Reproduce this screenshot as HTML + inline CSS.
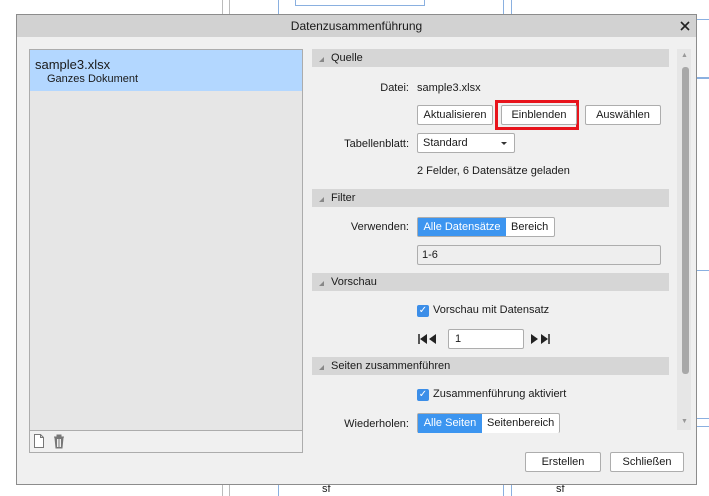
<!DOCTYPE html>
<html><head><style>
*{box-sizing:border-box;margin:0;padding:0}
body{width:709px;height:496px;background:#fff;position:relative;overflow:hidden;font-family:"Liberation Sans",sans-serif;font-size:11px;color:#1a1a1a}
.a{position:absolute}
.vl{position:absolute;width:1px}
.btn{position:absolute;background:#fff;border:1px solid #adadad;border-radius:2px;text-align:center;line-height:18px;font-size:11px}
.sec{position:absolute;left:312px;width:357px;height:18px;background:#d6d6d6;line-height:18px;padding-left:19px;font-size:11px}
.sec:before{content:"";position:absolute;left:7px;top:8px;border-left:5px solid transparent;border-bottom:5px solid #888}
.lbl{position:absolute;text-align:right;font-size:11px}
.chk{position:absolute;width:12px;height:12px;background:#3c8ee8;border-radius:2px;color:#fff;font-size:10px;line-height:12px;text-align:center}
</style></head><body>
<div class="vl" style="left:222px;top:0;height:14px;background:#bbb"></div>
<div class="vl" style="left:229px;top:0;height:14px;background:#bbb"></div>
<div class="vl" style="left:278px;top:0;height:14px;background:#8ab0e0"></div>
<div class="a" style="left:295px;top:0;width:130px;height:6px;border:1px solid #8ab0e0;border-top:none"></div>
<div class="vl" style="left:503px;top:0;height:14px;background:#8ab0e0"></div>
<div class="vl" style="left:511px;top:0;height:14px;background:#8ab0e0"></div>
<div class="a" style="left:697px;top:19px;width:12px;height:1px;background:#8ab0e0"></div>
<div class="a" style="left:697px;top:77px;width:12px;height:2px;background:#8ab0e0"></div>
<div class="a" style="left:697px;top:270px;width:12px;height:1px;background:#8ab0e0"></div>
<div class="a" style="left:697px;top:418px;width:12px;height:1px;background:#8ab0e0"></div>
<div class="a" style="left:697px;top:426px;width:12px;height:1px;background:#8ab0e0"></div>
<div class="vl" style="left:222px;top:484px;height:12px;background:#bbb"></div>
<div class="vl" style="left:229px;top:484px;height:12px;background:#bbb"></div>
<div class="vl" style="left:278px;top:484px;height:12px;background:#8ab0e0"></div>
<div class="vl" style="left:503px;top:484px;height:12px;background:#8ab0e0"></div>
<div class="vl" style="left:511px;top:484px;height:12px;background:#8ab0e0"></div>
<div class="a" style="left:322px;top:483px;font-size:11px">sf</div>
<div class="a" style="left:556px;top:483px;font-size:11px">sf</div>

<div class="a" style="left:16px;top:14px;width:681px;height:471px;background:#f0f0f0;border:1px solid #8c8c8c"></div>
<div class="a" style="left:17px;top:15px;width:679px;height:22px;background:#d2d2d2;text-align:center;line-height:22px;font-size:12px">Datenzusammenführung</div>
<svg class="a" style="left:680px;top:21px" width="10" height="10"><path d="M1 1L9 9M9 1L1 9" stroke="#222" stroke-width="1.6"/></svg>

<div class="a" style="left:29px;top:49px;width:274px;height:404px;border:1px solid #acacac;background:#e6e6e6"></div>
<div class="a" style="left:30px;top:50px;width:272px;height:41px;background:#b3d7ff"></div>
<div class="a" style="left:35px;top:57px;font-size:13px">sample3.xlsx</div>
<div class="a" style="left:47px;top:73px;font-size:11px">Ganzes Dokument</div>
<div class="a" style="left:30px;top:430px;width:272px;height:22px;background:#f0f0f0;border-top:1px solid #acacac"></div>
<svg class="a" style="left:33px;top:433px" width="40" height="16"><path d="M1.5 1.5h6l3 3v10h-9z M7.5 1.5v3h3" fill="#fff" stroke="#777"/><path d="M21 4h10M24 4v-2h4v2M22 5h8l-1 10h-6z" fill="#777" stroke="#777"/><path d="M24.5 6v8M26 6v8M27.5 6v8" stroke="#eee"/></svg>

<div class="sec" style="top:49px">Quelle</div>
<div class="lbl" style="left:340px;top:82px;width:69px">Datei:</div>
<div class="a" style="left:417px;top:82px">sample3.xlsx</div>
<div class="btn" style="left:417px;top:105px;width:76px">Aktualisieren</div>
<div class="a" style="left:495px;top:100px;width:84px;height:30px;border:3px solid #e8141c"></div>
<div class="btn" style="left:501px;top:105px;width:76px">Einblenden</div>
<div class="btn" style="left:585px;top:105px;width:76px">Auswählen</div>
<div class="lbl" style="left:320px;top:138px;width:89px">Tabellenblatt:</div>
<div class="btn" style="left:417px;top:133px;width:98px;text-align:left;padding-left:5px">Standard<span style="position:absolute;right:7px;top:8px;border-left:3px solid transparent;border-right:3px solid transparent;border-top:3px solid #333"></span></div>
<div class="a" style="left:417px;top:165px">2 Felder, 6 Datensätze geladen</div>

<div class="sec" style="top:189px">Filter</div>
<div class="lbl" style="left:320px;top:221px;width:89px">Verwenden:</div>
<div class="a" style="left:417px;top:217px;width:138px;height:20px;border:1px solid #adadad;border-radius:2px;background:#fff;line-height:18px"><span style="position:absolute;left:0;top:0;width:88px;height:18px;background:#3c95f0;color:#fff;text-align:center">Alle Datensätze</span><span style="position:absolute;left:93px">Bereich</span></div>
<div class="a" style="left:417px;top:245px;width:244px;height:20px;border:1px solid #adadad;border-radius:2px;background:#eee;line-height:18px;padding-left:4px">1-6</div>

<div class="sec" style="top:273px">Vorschau</div>
<div class="chk" style="left:417px;top:305px">✓</div>
<div class="a" style="left:433px;top:304px">Vorschau mit Datensatz</div>
<svg class="a" style="left:418px;top:333px" width="26" height="12"><path d="M1 1v10" stroke="#222" stroke-width="1.5"/><path d="M2 6l7-5v10z M11 6l7-5v10z" fill="#222"/></svg>
<div class="a" style="left:448px;top:329px;width:76px;height:20px;border:1px solid #adadad;border-radius:2px;background:#fff;line-height:18px;padding-left:6px">1</div>
<svg class="a" style="left:530px;top:333px" width="26" height="12"><path d="M1 1l7 5-7 5z M11 1l7 5-7 5z" fill="#222"/><path d="M19 1v10" stroke="#222" stroke-width="1.5"/></svg>

<div class="sec" style="top:357px">Seiten zusammenführen</div>
<div class="chk" style="left:417px;top:389px">✓</div>
<div class="a" style="left:433px;top:388px">Zusammenführung aktiviert</div>
<div class="lbl" style="left:320px;top:418px;width:89px">Wiederholen:</div>
<div class="a" style="left:417px;top:413px;width:143px;height:20px;border:1px solid #adadad;border-bottom:none;border-radius:2px;background:#fff;line-height:18px"><span style="position:absolute;left:0;top:0;width:64px;height:19px;background:#3c95f0;color:#fff;text-align:center">Alle Seiten</span><span style="position:absolute;left:69px">Seitenbereich</span></div>

<div class="a" style="left:677px;top:49px;width:14px;height:381px;background:#e6e6e6"></div>
<div class="a" style="left:681px;top:52px;font-size:7px;color:#999">▲</div>
<div class="a" style="left:681px;top:418px;font-size:7px;color:#999">▼</div>
<div class="a" style="left:682px;top:67px;width:7px;height:307px;background:#a8a8a8;border-radius:3px"></div>

<div class="btn" style="left:525px;top:452px;width:76px;height:20px">Erstellen</div>
<div class="btn" style="left:610px;top:452px;width:74px;height:20px">Schließen</div>
</body></html>
